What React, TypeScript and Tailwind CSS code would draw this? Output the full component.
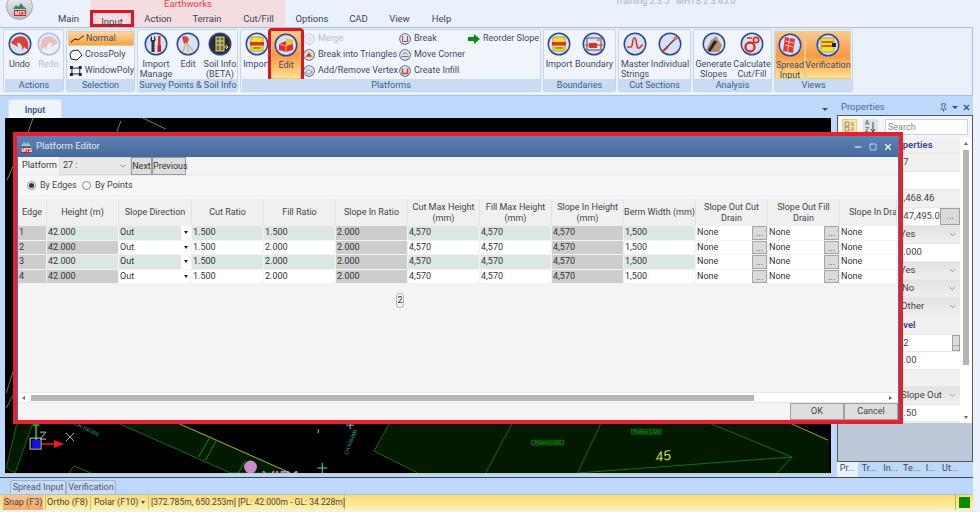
import * as React from 'react';
import { ChevronDown, Pin, X, Minus, Square } from 'lucide-react';

const tabs = [
  { label: 'Main', w: 'w-[43px]' },
  { label: 'Input', w: 'w-[44px]', boxed: true },
  { label: 'Action', w: 'w-[48px]' },
  { label: 'Terrain', w: 'w-[50px]' },
  { label: 'Cut/Fill', w: 'w-[53px]' },
  { label: 'Options', w: 'w-[54px]' },
  { label: 'CAD', w: 'w-[39px]' },
  { label: 'View', w: 'w-[43px]' },
  { label: 'Help', w: 'w-[41px]' },
];

const columns = ['Edge', 'Height (m)', 'Slope Direction', 'Cut Ratio', 'Fill Ratio', 'Slope In Ratio', 'Cut Max Height (mm)', 'Fill Max Height (mm)', 'Slope In Height (mm)', 'Berm Width (mm)', 'Slope Out Cut Drain', 'Slope Out Fill Drain', 'Slope In Drain'];

const rows = [
  { edge: '1', fill: '1.500' },
  { edge: '2', fill: '2.000' },
  { edge: '3', fill: '2.000' },
  { edge: '4', fill: '2.000' },
];

const gridCols = 'grid grid-cols-[29px_72px_73px_72px_72px_72px_72px_72px_72px_72px_72px_72px_57px]';

// round ribbon icon: navy ring with a little glyph inside
function Round({ size = 24, dark, faded, children }: { size?: number; dark?: boolean; faded?: boolean; children?: React.ReactNode }) {
  return (
    <svg width={size} height={size} viewBox="0 0 24 24" className={faded ? 'opacity-30 shrink-0' : 'shrink-0'}>
      <circle cx="12" cy="12" r="11.5" fill="#34478f" />
      <circle cx="12" cy="12" r="10" fill={dark ? '#2b2b2b' : '#d6e2f2'} />
      {children}
    </svg>
  );
}

const glyphs: Record<string, React.ReactNode> = {
  undo: <path d="M3 11 C6 5 11 3 16 5 C20 7 21 12 20 18 L16 15 L14 19 C15 13 12 10 9 11 L10 15 Z" fill="#d8433a" />,
  redo: <path d="M21 11 C18 5 13 3 8 5 C4 7 3 12 4 18 L8 15 L10 19 C9 13 12 10 15 11 L14 15 Z" fill="#d8433a" />,
  manage: (
    <g>
      <path d="M8 4 L8 8 L10 8 L10 4 C12 5 12 9 10.5 10 L10.5 20 L7.5 20 L7.5 10 C6 9 6 5 8 4 Z" fill="#333" />
      <rect x="14" y="4" width="2.5" height="9" fill="#d92a2a" />
      <rect x="13.5" y="13" width="3.5" height="7" fill="#c81e1e" />
    </g>
  ),
  survey: (
    <g>
      <path d="M6 5 C11 3 14 6 12 10 L8 12 Z" fill="#d8433a" />
      <path d="M10 11 L7 20 M11 11 L12 20 M11 11 L17 19" stroke="#c9b98a" strokeWidth="1.4" fill="none" />
    </g>
  ),
  soil: (
    <g>
      <rect x="8" y="5" width="8" height="14" fill="#6d6d42" stroke="#d9d37a" strokeWidth="1" />
      <path d="M8 9 H16 M8 13 H16 M12 5 V19" stroke="#e2dc7c" strokeWidth="1" />
      <path d="M16 15 H20 L18 13 M20 15 L18 17" stroke="#e8e23a" strokeWidth="1" fill="none" />
    </g>
  ),
  import: (
    <g>
      <rect x="6" y="5" width="12" height="14" fill="#f3e22c" stroke="#8a7c20" strokeWidth=".6" />
      <rect x="5" y="10" width="14" height="3.5" fill="#d9322a" />
      <path d="M8 16 H16" stroke="#555" strokeWidth="1" />
    </g>
  ),
  edit: (
    <g>
      <path d="M5 11 L12 8 L19 11 L19 17 L12 19 L5 17 Z" fill="#d9322a" />
      <path d="M12 5 L19 7 L19 11 L12 13 Z" fill="#eec23e" />
      <path d="M5 11 L12 13 L12 19" stroke="#fff" strokeWidth=".6" fill="none" />
    </g>
  ),
  boundary: (
    <g>
      <rect x="5" y="6" width="14" height="12" fill="none" stroke="#555" strokeWidth="1" />
      <rect x="7" y="11" width="8" height="5" fill="#d9322a" />
      <path d="M15 8 H18 M3 13 H21" stroke="#d9322a" strokeWidth="1" />
    </g>
  ),
  master: <path d="M4 15 H8 C10 15 9 6 11.5 6 C14 6 13 15 15 16 C17 17 18 13 20 13" stroke="#d9322a" strokeWidth="1.6" fill="none" />,
  individual: (
    <g>
      <path d="M6 18 L17 7" stroke="#444" strokeWidth="1.4" />
      <circle cx="17.5" cy="6.5" r="2" fill="#e0705a" />
      <path d="M5 19 L10 15" stroke="#d9322a" strokeWidth="2" />
    </g>
  ),
  slopes: (
    <g>
      <path d="M4 18 L9 8 L14 5 L20 13 L17 20 L7 20 Z" fill="#b88d6a" />
      <path d="M6 18 L13 7 L15 10 L8 20 Z" fill="#222" />
      <path d="M11 7 L14 4 L16 7 L13 9 Z" fill="#999" />
    </g>
  ),
  calc: (
    <g>
      <circle cx="10" cy="15" r="4.5" fill="none" stroke="#d9322a" strokeWidth="2.4" />
      <circle cx="16" cy="8" r="2.6" fill="none" stroke="#d9322a" strokeWidth="1.8" />
      <path d="M7 6 H12 M12 12 L14 10" stroke="#d9322a" strokeWidth="1.6" />
    </g>
  ),
  spread: (
    <g>
      <path d="M7 4 L17 6 L15 20 L5 18 Z" fill="#dd3b33" />
      <path d="M7.5 8 L16 10 M7 12 L15.5 14 M11.5 5 L9.5 19" stroke="#f7c7c0" strokeWidth=".9" />
    </g>
  ),
  verify: (
    <g>
      <rect x="5" y="5" width="13" height="14" fill="#f3e22c" stroke="#8a7c20" strokeWidth=".6" />
      <path d="M6 9 H17 M6 13 H17" stroke="#d9322a" strokeWidth="1.6" />
      <rect x="16" y="10" width="4" height="4" fill="#222" />
    </g>
  ),
  merge: <path d="M7 8 H17 V16 H7 Z" fill="#e6b8a8" />,
  triangles: <path d="M5 16 L12 6 L19 16 Z" fill="#d9322a" stroke="#eec23e" strokeWidth="1.4" />,
  vertex: <path d="M5 15 L10 9 L19 14 L12 18 Z" fill="#eef1c0" stroke="#557" strokeWidth="1.2" />,
  brk: <path d="M7 6 V17 H17 V6" stroke="#c64a40" strokeWidth="2" fill="none" />,
  corner: <path d="M5 15 H19 M7 11 C10 7 14 7 17 11" stroke="#8a7c50" strokeWidth="2" fill="none" />,
  infill: <path d="M7 7 V17 H17 V7" stroke="#c64a40" strokeWidth="3" fill="#f0d8c0" />,
};

function Large({ icon, lines, w, dark, faded, active, boxed }: { icon: string; lines: string[]; w: string; dark?: boolean; faded?: boolean; active?: boolean; boxed?: boolean }) {
  return (
    <div className={`${w} h-[48px] shrink-0 flex flex-col items-center pt-[1px] ${active ? 'bg-gradient-to-b from-[#fbc88c] via-[#f89a43] to-[#ffe08c] border border-[#e8c98e] rounded-[1px]' : ''} ${boxed ? 'outline-[3px] outline-[#e3141f]' : ''}`}>
      <Round dark={dark} faded={faded}>{glyphs[icon]}</Round>
      <div className={`mt-[3px] text-center leading-[10px] whitespace-nowrap ${faded ? 'text-[#b6bfcc]' : 'text-[#3d4a63]'}`}>
        {lines.map((l) => <div key={l}>{l}</div>)}
      </div>
    </div>
  );
}

function Small({ icon, label, faded }: { icon: string; label: string; faded?: boolean }) {
  return (
    <div className={`h-[16px] flex items-center gap-[3px] whitespace-nowrap ${faded ? 'text-[#b6bfcc]' : 'text-[#3d4a63]'}`}>
      <Round size={12} faded={faded}>{glyphs[icon]}</Round>
      <span>{label}</span>
    </div>
  );
}

function Group({ title, w, children, className = '' }: { title: string; w: string; children: React.ReactNode; className?: string }) {
  return (
    <div className={`${w} shrink-0 h-[63px] mt-[1px] flex flex-col border border-[#c4d7ee] rounded-[2px] bg-[#f0f5fc] ${className}`}>
      <div className="flex-1 flex pt-[1px] min-h-0">{children}</div>
      <div className="h-[12px] bg-[#c9dcf1] text-center text-[#3c5b8e] leading-[12px] whitespace-nowrap">{title}</div>
    </div>
  );
}

function RibbonBar() {
  return (
    <div className="h-[69px] w-[973px] shrink-0 flex gap-[2px] pl-[3px] bg-[#eaf1fb] border-y border-[#a9bfd9] border-r">
      <Group title="Actions" w="w-[61px]" className="pl-[1px]">
        <Large icon="undo" lines={['Undo']} w="w-[29px]" />
        <Large icon="redo" lines={['Redo']} w="w-[29px]" faded />
      </Group>
      <Group title="Selection" w="w-[69px]">
        <div className="flex flex-col pl-[1px] w-full">
          <div className="h-[15px] flex items-center gap-[2px] bg-gradient-to-b from-[#fdd59b] to-[#f8a13f] border border-[#e8c98e] pl-[1px] text-[#3d4a63]">
            <svg width="14" height="10" viewBox="0 0 14 10"><path d="M1 8 L5 5 L8 6 L13 2" stroke="#222" fill="none" /><path d="M1 8 h1 M5 5 h1 M13 2 h1" stroke="#c00" /></svg>
            Normal
          </div>
          <div className="h-[16px] mt-[1px] flex items-center gap-[2px] pl-[1px] text-[#3d4a63]">
            <svg width="14" height="12" viewBox="0 0 14 12"><path d="M3 2 L9 1 L13 6 L8 11 L2 10 L1 5 Z" stroke="#222" fill="#fff" /></svg>
            CrossPoly
          </div>
          <div className="h-[16px] flex items-center gap-[2px] pl-[1px] text-[#3d4a63]">
            <svg width="14" height="12" viewBox="0 0 14 12"><path d="M3 3 H11 V9 H3 Z" stroke="#222" fill="none" /><path d="M1 1 h3 v3 h-3 Z M10 1 h3 v3 h-3 Z M1 8 h3 v3 h-3 Z M10 8 h3 v3 h-3 Z" fill="#222" /></svg>
            WindowPoly
          </div>
        </div>
      </Group>
      <Group title="Survey Points & Soil Info" w="w-[101px]" className="pl-[1px]">
        <Large icon="manage" lines={['Import', 'Manage']} w="w-[34px]" />
        <Large icon="survey" lines={['Edit']} w="w-[30px]" />
        <Large icon="soil" lines={['Soil Info', '(BETA)']} w="w-[34px]" dark />
      </Group>
      <Group title="Platforms" w="w-[301px]" className="pl-[1px]">
        <Large icon="import" lines={['Import']} w="w-[29px]" />
        <Large icon="edit" lines={['Edit']} w="w-[30px]" active boxed />
        <div className="flex flex-col ml-[2px] w-[96px]">
          <Small icon="merge" label="Merge" faded />
          <Small icon="triangles" label="Break into Triangles" />
          <Small icon="vertex" label="Add/Remove Vertex" />
        </div>
        <div className="flex flex-col w-[69px]">
          <Small icon="brk" label="Break" />
          <Small icon="corner" label="Move Corner" />
          <Small icon="infill" label="Create Infill" />
        </div>
        <div className="h-[16px] flex items-center gap-[3px] whitespace-nowrap text-[#3d4a63]">
          <svg width="12" height="10" viewBox="0 0 12 10"><path d="M0 3 H6 V0 L12 5 L6 10 V7 H0 Z" fill="#0b8a1c" /></svg>
          Reorder Slope
        </div>
      </Group>
      <Group title="Boundaries" w="w-[73px]">
        <Large icon="import" lines={['Import']} w="w-[30px]" />
        <Large icon="boundary" lines={['Boundary']} w="w-[40px]" />
      </Group>
      <Group title="Cut Sections" w="w-[73px]">
        <Large icon="master" lines={['Master', 'Strings']} w="w-[32px]" />
        <Large icon="individual" lines={['Individual']} w="w-[38px]" />
      </Group>
      <Group title="Analysis" w="w-[79px]">
        <Large icon="slopes" lines={['Generate', 'Slopes']} w="w-[39px]" />
        <Large icon="calc" lines={['Calculate', 'Cut/Fill']} w="w-[38px]" />
      </Group>
      <Group title="Views" w="w-[79px]">
        <Large icon="spread" lines={['Spread', 'Input']} w="w-[30px]" active />
        <Large icon="verify" lines={['Verification']} w="w-[46px]" active />
      </Group>
    </div>
  );
}

function CadDrawing() {
  return (
    <svg viewBox="5 119 826 356" className="w-full h-full block" fontFamily="Liberation Sans, sans-serif">
      <path d="M32 119 L27 133 M13 165 L6 181" stroke="#8d8d1f" fill="none" />
      <path d="M120 122 L116 133 M140 118 L165 130" stroke="#7f8d20" fill="none" />
      <path d="M5 395 L13 370 M5 410 L13 395" stroke="#6f7d1f" fill="none" />
      <path d="M5 470 L16 424 L32 424 L14 475 Z" fill="#041a00" stroke="#0b6a0b" />
      <path d="M115 424 L230 475 L290 475 L175 424 Z" fill="#041a00" stroke="#0f6f0f" />
      <path d="M175 424 L290 475" stroke="#a0a020" />
      <path d="M198 459 L210 438 M205 462 L216 442 M238 475 L245 462" stroke="#0f8a0f" />
      <path d="M68 475 L73 468 L90 475" stroke="#0f7a0f" fill="none" />
      <path d="M374 453 L418 475 H830 V442 L789 424 H390 Z" fill="#041a00" />
      <path d="M390 424 L374 453 L418 475 M513 424 L486 475 M602 424 L578 475 M708 424 L793 459 L778 475 M578 475 L793 459" stroke="#0f6f0f" fill="none" />
      <path d="M789 424 L829 442" stroke="#a3a320" />
      <rect x="532" y="442" width="32" height="5" fill="#0a3a0a" stroke="#0f7f0f" strokeWidth=".6" />
      <rect x="632" y="431" width="30" height="5" fill="#0a3a0a" stroke="#0f7f0f" strokeWidth=".6" />
      <text x="535" y="446" fill="#1f9a1f" fontSize="4">Platform 1-426</text>
      <text x="634" y="435" fill="#1f9a1f" fontSize="4">Platform 1-426</text>
      <text x="657" y="464" fill="#c8d82c" fontSize="14" fontStyle="italic" transform="rotate(-10 657 464)">45</text>
      <circle cx="250" cy="469" r="6.5" fill="#c98ac9" />
      <text x="262" y="486" fill="#c98ac9" fontSize="18">VIP1</text>
      <path d="M317 470 H327 M322 465 V475 M350 423 V431 M346 427 H354 M318 431 V435" stroke="#59d8d8" />
      <text x="73" y="427" fill="#24b9b9" fontSize="5" transform="rotate(25 73 427)">CH 700.000</text>
      <text x="347" y="457" fill="#24b9b9" fontSize="5" transform="rotate(-68 347 457)">CH 570.000</text>
      <path d="M35 446 V427" stroke="#18a02a" strokeWidth="2" />
      <path d="M31 428 L35 422 L39 428 Z" fill="#18a02a" />
      <path d="M40 446 H54" stroke="#ee1c1c" strokeWidth="1.5" />
      <path d="M53 442 L63 446 L53 450 Z" fill="#ee1c1c" />
      <rect x="29" y="440" width="11" height="11" fill="none" stroke="#ccc" />
      <rect x="31" y="442" width="8" height="8" fill="#1010f0" />
      <path d="M39 434 H45 L39 441 H45 M65 435 L73 443 M73 435 L65 443" stroke="#bbb" fill="none" />
    </svg>
  );
}

function Dialog() {
  return (
    <div className="absolute left-[13px] top-[132px] w-[890px] h-[292px] border-4 border-[#e81f2e] flex flex-col bg-[#f4f4f4]">
      <div className="h-[21px] shrink-0 bg-gradient-to-b from-[#5f82b5] to-[#466a9e] flex items-center pl-[3px] text-[#e3e9f2] text-[9.5px]">
        <svg width="12" height="12" viewBox="0 0 12 12"><path d="M1 5 L4 1 L6 3 L8 1 L11 5 Z" fill="#7fd0d8" /><rect x="1" y="6" width="10" height="6" fill="#c21f26" /><text x="1.5" y="11" fontSize="5" fontWeight="700" fill="#fff">MTS</text></svg>
        <span className="ml-[4px]">Platform Editor</span>
        <div className="ml-auto flex items-center gap-[6px] pr-[6px] text-white">
          <Minus size={10} strokeWidth={2.5} />
          <Square size={8} strokeWidth={2} />
          <X size={10} strokeWidth={3} />
        </div>
      </div>
      <div className="flex-1 flex flex-col min-h-0 border-r border-b-0 border-[#4c6f9f] border-l">
        <div className="h-[18px] shrink-0 flex items-center">
          <span className="ml-[4px] w-[37px] text-[#3a3a3a]">Platform</span>
          <div className="w-[72px] h-[18px] bg-[#e8e8e8] border border-[#dcdcdc] flex items-center pl-[3px] text-[#444]">
            27 :
            <ChevronDown size={8} className="ml-auto mr-[3px] text-[#666]" />
          </div>
          <div className="w-[21px] h-[18px] bg-[#dddddd] border border-[#9a9a9a] text-center leading-[16px] text-[#333]">Next</div>
          <div className="w-[34px] h-[18px] bg-[#dddddd] border border-[#9a9a9a] text-center leading-[16px] text-[#333]">Previous</div>
        </div>
        <div className="h-[21px] shrink-0 mx-[1px] mt-0 flex items-center gap-[4px] pl-[8px] bg-[#f7f7f7] border-y border-[#e7eef6] text-[#444]">
          <span className="w-[9px] h-[9px] rounded-full border border-[#888] bg-white flex items-center justify-center"><span className="w-[5px] h-[5px] rounded-full bg-[#333]" /></span>
          <span className="w-[38px]">By Edges</span>
          <span className="w-[9px] h-[9px] rounded-full border border-[#888] bg-white" />
          <span>By Points</span>
        </div>
        <div className="mt-[3px] overflow-hidden shrink-0">
          <div className={`${gridCols} h-[27px] bg-[#f3f3f3]`}>
            {columns.map((c) => (
              <div key={c} className={`border-r border-[#e3e3e3] bg-[#f0f0f0] flex items-center text-center leading-[10.5px] text-[#444] overflow-hidden ${c === 'Slope In Drain' ? 'pl-[9px] whitespace-nowrap' : 'justify-center px-[1px]'}`}>
                <span className={c === 'Berm Width (mm)' ? 'whitespace-nowrap' : ''}>{c}</span>
              </div>
            ))}
          </div>
          {rows.map((r, i) => {
            const tint = i % 2 === 0 ? 'bg-[#dce8e1]' : 'bg-white';
            const cell = `h-[14.5px] border-r border-b border-[#f3f3f3] leading-[13px] pl-[1px] text-[#333] overflow-hidden whitespace-nowrap`;
            const ro = 'bg-[#cdcdcd]';
            return (
              <div key={r.edge} className={gridCols}>
                <div className={`${cell} ${ro}`}>{r.edge}</div>
                <div className={`${cell} ${i % 2 === 0 ? tint : ro} leading-[11px]`}>42.000</div>
                <div className={`${cell} ${tint} flex`}>Out<span className="ml-auto w-[10px] h-full bg-white flex items-center justify-center"><span className="border-x-[2.5px] border-x-transparent border-t-[3px] border-t-[#222]" /></span></div>
                <div className={`${cell} ${tint}`}>1.500</div>
                <div className={`${cell} ${tint}`}>{r.fill}</div>
                <div className={`${cell} ${ro}`}>2.000</div>
                <div className={`${cell} ${tint}`}>4,570</div>
                <div className={`${cell} ${tint}`}>4,570</div>
                <div className={`${cell} ${ro}`}>4,570</div>
                <div className={`${cell} ${tint}`}>1,500</div>
                {['a', 'b'].map((k) => (
                  <div key={k} className={`${cell} bg-white flex`}>
                    <span className="flex-1">None</span>
                    <span className="w-[15px] h-full bg-[#dadada] border border-[#a5a5a5] text-center leading-[12px] text-[#444]">...</span>
                  </div>
                ))}
                <div className={`${cell} bg-white`}>None</div>
              </div>
            );
          })}
        </div>
        <div className="flex-1 min-h-0 pl-[378px] pt-[9px]">
          <div className="w-[8px] h-[15px] rounded-[3px] border border-[#b8b8b8] text-center leading-[13px] text-[#333]">2</div>
        </div>
        <div className="h-[11px] shrink-0 bg-white border-y border-[#e8e8e8] flex items-center px-[4px] gap-[6px]">
          <span className="border-y-[2.5px] border-y-transparent border-r-[3px] border-r-[#666]" />
          <div className="w-[723px] h-[6px] bg-[#b5b5b5]" />
          <span className="ml-auto border-y-[2.5px] border-y-transparent border-l-[3px] border-l-[#666] mr-[2px]" />
        </div>
        <div className="h-[17px] shrink-0 flex justify-end text-[#444]">
          <div className="w-[54px] bg-[#dddddd] border border-[#a0a0a0] text-center leading-[15px]">OK</div>
          <div className="w-[54px] bg-[#dddddd] border border-[#a0a0a0] text-center leading-[15px]">Cancel</div>
        </div>
      </div>
    </div>
  );
}

function PropRow({ text, kind, h, pad = 'pl-[60px]', pick, button }: { text: string; kind: 'grey' | 'white' | 'head' | 'combo'; h: string; pad?: string; pick?: boolean; button?: string }) {
  const bg = kind === 'white' ? 'bg-white' : kind === 'combo' ? 'bg-gradient-to-b from-[#e2e2e2] to-[#efefef]' : 'bg-[#f0f0f0]';
  const color = kind === 'head' ? 'text-[#38438f] font-semibold' : 'text-[#444]';
  return (
    <div className={`${h} ${pad} ${bg} ${color} border-b border-[#e8e8e8] flex items-center whitespace-nowrap overflow-hidden`}>
      <span className="text-[9.5px]">{text}</span>
      {pick && <ChevronDown size={9} className="ml-auto mr-[3px] text-[#777] shrink-0" />}
      {button && <span className={`ml-auto ${button} h-full bg-[#dadada] border border-[#a0a0a0] text-center leading-[14px] shrink-0`}>...</span>}
    </div>
  );
}

function PropertiesPanel() {
  return (
    <div className="w-[138px] shrink-0 ml-[4px] flex flex-col mt-[1px]">
      <div className="h-[15px] flex items-center text-[#4a6a9a] pl-[6px]">
        <span className="text-[9.5px]">Properties</span>
        <div className="ml-auto flex items-center gap-[4px] pr-[2px] text-[#2f4d7d]">
          <Pin size={9} />
          <span className="border-x-[3px] border-x-transparent border-t-[3px] border-t-[#2f4d7d]" />
          <X size={9} strokeWidth={3} />
        </div>
      </div>
      <div className="h-[348px] border border-[#555] bg-[#bcc8d8] ml-[2px] flex flex-col">
        <div className="h-[22px] shrink-0 bg-[#f2f6fb] flex items-center pl-[4px]">
          <span className="w-[15px] h-[15px] bg-[#fae5a5] border border-[#e8cd80] flex items-center justify-center">
            <svg width="11" height="11" viewBox="0 0 11 11"><path d="M1 1 h4 v4 h-4 Z M1 6 h4 v4 h-4 Z" fill="none" stroke="#777" strokeWidth=".8" /><path d="M7 2 h3 M7 4 h3 M7 7 h3 M7 9 h3" stroke="#777" strokeWidth=".8" /></svg>
          </span>
          <span className="w-[15px] h-[16px] ml-[6px] bg-[#dde3ea] flex items-center justify-center gap-[1px] text-[6.5px] leading-[7px] text-[#444]">
            <span className="text-center">A<br />Z</span>
            <svg width="6" height="12" viewBox="0 0 6 12"><path d="M3 1 V10 M1 8 L3 11 L5 8" stroke="#444" fill="none" /></svg>
          </span>
          <span className="w-[83px] h-[16px] ml-[7px] bg-white border border-[#c9d3df] pl-[2px] text-[#888] leading-[14px]">Search</span>
        </div>
        <div className="h-[285px] shrink-0 flex">
          <div className="w-[123px] flex flex-col bg-[#f0f0f0]">
            <PropRow text="Properties" kind="head" h="h-[16px]" pad="pl-[50px]" />
            <PropRow text="27" kind="grey" h="h-[18px]" />
            <PropRow text="" kind="white" h="h-[18px]" />
            <PropRow text="1,468.46" kind="grey" h="h-[18px]" />
            <PropRow text="347,495.0" kind="white" h="h-[18px]" button="w-[20px]" />
            <PropRow text="Yes" kind="combo" h="h-[18px]" pad="pl-[62px]" pick />
            <PropRow text="1.000" kind="white" h="h-[18px]" />
            <PropRow text="Yes" kind="combo" h="h-[18px]" pad="pl-[62px]" pick />
            <PropRow text="No" kind="combo" h="h-[18px]" pad="pl-[64px]" pick />
            <PropRow text="Other" kind="combo" h="h-[18px]" pad="pl-[63px]" pick />
            <PropRow text="Level" kind="head" h="h-[19px]" pad="pl-[55px]" />
            <PropRow text="42" kind="white" h="h-[17px]" button="w-[8px]" />
            <PropRow text="0.00" kind="white" h="h-[18px]" />
            <PropRow text="" kind="grey" h="h-[17px]" />
            <PropRow text="Slope Out" kind="combo" h="h-[18px]" pad="pl-[63px]" pick />
            <PropRow text="1.50" kind="white" h="h-[17px]" />
          </div>
          <div className="w-[12px] bg-white flex flex-col items-center pt-[4px]">
            <span className="border-x-[2px] border-x-transparent border-b-[3px] border-b-[#666]" />
            <div className="w-[6px] h-[215px] mt-[5px] bg-[#b5b5b5]" />
            <span className="mt-auto mb-[4px] border-x-[2px] border-x-transparent border-t-[3px] border-t-[#666]" />
          </div>
        </div>
      </div>
      <div className="h-[15px] ml-[2px] flex text-[#445]">
        <span className="w-[21px] bg-[#eaf1fb] text-center">Pr...</span>
        <span className="w-[22px] text-center">Tr...</span>
        <span className="w-[21px] text-center">In...</span>
        <span className="w-[21px] text-center">Te...</span>
        <span className="w-[17px] text-center">I...</span>
        <span className="w-[22px] text-center">Ut...</span>
      </div>
    </div>
  );
}

export default function App() {
  return (
    <div className="relative w-[980px] h-[512px] overflow-hidden bg-[#eaf1fb] text-[9px] flex flex-col" style={{ fontFamily: 'Roboto, sans-serif' }}>
      {/* title strip + tabs */}
      <div className="relative h-[27px] shrink-0 flex items-end pl-[47px]">
        <div className="absolute left-[91px] top-0 w-[194px] h-[27px] bg-[#f3dde1] text-center text-[#ef3b4d] text-[9.5px] leading-[8px]">Earthworks</div>
        <div className="absolute left-[6px] -top-[7px] w-[27px] h-[27px] rounded-full bg-gradient-to-b from-[#f4f4f4] to-[#b7bcc4] border border-[#aaa] flex items-end justify-center pb-[2px]">
          <svg width="16" height="15" viewBox="0 0 16 15"><path d="M1 7 L4 3 L6 5 L9 1 L11 4 L15 7 Z" fill="#2b8a6a" /><rect x="2" y="8" width="12" height="6" fill="#c21f26" /><text x="3" y="13" fontSize="5" fontWeight="700" fill="#fff">MTS</text></svg>
        </div>
        <div className="absolute left-[615px] -top-[5px] text-[#a8b2c0] whitespace-nowrap">Training 2.3.5 &nbsp; MHTS 2.3.45.0</div>
        {tabs.map((t) => (
          <div key={t.label} className={`relative ${t.w} h-[17px] text-center text-[#38445a] text-[9.5px] leading-[17px] ${t.boxed ? 'border-[3px] border-[#e3141f] leading-[11px]' : ''}`}>{t.label}</div>
        ))}
      </div>
      <RibbonBar />
      {/* workspace */}
      <div className="flex-1 min-h-0 w-[973px] bg-[#bcd8fb] flex flex-col">
        <div className="flex-1 min-h-0 flex pl-[5px] pt-[3px]">
          <div className="w-[826px] shrink-0 flex flex-col">
            <div className="h-[19px] flex shrink-0 relative">
              <div className="ml-[3px] w-[54px] bg-[#eef4fc] border border-b-0 border-[#d5e3f5] rounded-t-[3px] text-center font-semibold text-[#3c5b8e] leading-[21px]">Input</div>
              <span className="absolute right-[3px] top-[9px] border-x-[3px] border-x-transparent border-t-[3px] border-t-[#2f4d7d]" />
            </div>
            <div className="h-[356px] bg-black border-b border-[#ccc]"><CadDrawing /></div>
          </div>
          <PropertiesPanel />
        </div>
        <div className="h-[17px] shrink-0 flex pl-[10px] pt-[2px] text-[#4a5a74] border-t border-[#444]">
          <span className="w-[56px] bg-[#c9dcf5] border border-b-0 border-[#9fb4d0] rounded-t-[3px] text-center leading-[13px] whitespace-nowrap">Spread Input</span>
          <span className="w-[50px] bg-[#c9dcf5] border border-b-0 border-[#9fb4d0] rounded-t-[3px] text-center leading-[13px] whitespace-nowrap">Verification</span>
        </div>
        <div className="h-[16px] shrink-0 flex items-stretch bg-gradient-to-b from-[#fddc72] to-[#fef0ae] border-t border-[#a9bfd9] text-[#444]">
          <span className="ml-[3px] w-[40px] bg-gradient-to-b from-[#fbc28a] to-[#f9a868] text-center leading-[14px]">Snap (F3)</span>
          <span className="ml-[2px] w-[44px] border-l border-[#d8bc66] text-center leading-[14px]">Ortho (F8)</span>
          <span className="ml-[1px] w-[57px] border-l border-[#d8bc66] pl-[3px] flex items-center">Polar (F10)<span className="ml-auto mr-[2px] border-x-[2px] border-x-transparent border-t-[3px] border-t-[#555]" /></span>
          <span className="ml-[1px] w-[197px] border-x border-[#d8bc66] pl-[2px] text-[8.5px] leading-[14px] whitespace-nowrap">[372.785m, 650.253m] [PL: 42.000m - GL: 34.228m]</span>
          <span className="ml-auto w-[18px] border-l border-[#c8ac56] flex items-center justify-center"><span className="w-[11px] h-[11px] bg-[#0a8a0a]" /></span>
        </div>
        <div className="h-[2px] shrink-0 bg-[#eaf1fb]" />
      </div>
      <Dialog />
    </div>
  );
}
